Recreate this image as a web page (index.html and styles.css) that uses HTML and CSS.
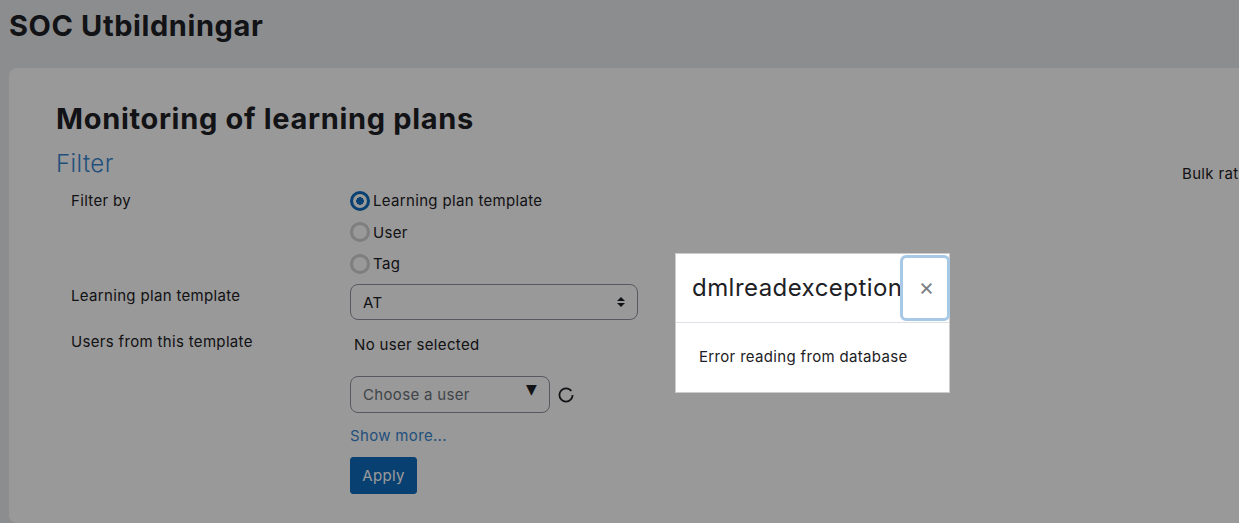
FILE: index.html
```html
<!DOCTYPE html>
<html lang="en">
<head>
    <meta charset="UTF-8">
    <meta name="viewport" content="width=device-width, initial-scale=1.0">
    <title>Monitoring of learning plans</title>
    <link rel="stylesheet" href="styles.css">
</head>
<body>
    <header class="page-header">
        <h1>SOC Utbildningar</h1>
    </header>

    <main class="card">
        <h2 class="card-title">Monitoring of learning plans</h2>
        <div class="card-columns">
            <section class="filter">
                <h3 class="filter-title">Filter</h3>

                <div class="form-row form-row-radios">
                    <div class="form-label">Filter by</div>
                    <div class="radios">
                        <label class="radio"><span class="radio-mark radio-mark-on"></span>Learning plan template</label>
                        <label class="radio"><span class="radio-mark"></span>User</label>
                        <label class="radio"><span class="radio-mark"></span>Tag</label>
                    </div>
                </div>

                <div class="form-row form-row-template">
                    <div class="form-label">Learning plan template</div>
                    <div class="select select-template">
                        AT
                        <svg class="select-arrows" width="10" height="12" viewBox="0 0 10 12"><path d="M1 5 5 1l4 4zM1 7l4 4 4-4z" fill="#1d2125"/></svg>
                    </div>
                </div>

                <div class="form-row form-row-users">
                    <div class="form-label">Users from this template</div>
                    <div class="users">
                        <div class="no-user">No user selected</div>
                        <div class="user-picker">
                            <div class="select select-user">
                                Choose a user
                                <span class="down-arrow">&#9660;</span>
                            </div>
                            <svg class="spinner" width="18" height="18" viewBox="0 0 18 18"><circle cx="9" cy="9" r="6.6" fill="none" stroke="#1d2125" stroke-width="1.8" stroke-dasharray="37 4.5"/></svg>
                        </div>
                        <a class="show-more" href="#">Show more...</a>
                        <button class="apply" type="button">Apply</button>
                    </div>
                </div>
            </section>

            <aside class="bulk">Bulk rating</aside>
        </div>
    </main>

    <div class="backdrop"></div>

    <div class="modal">
        <div class="modal-header">
            <div class="modal-title">dmlreadexception</div>
            <button class="modal-close" type="button">&times;</button>
        </div>
        <div class="modal-body">Error reading from database</div>
    </div>
</body>
</html>
```

FILE: styles.css
```css
* {
    box-sizing: border-box;
}

html, body {
    height: 100%;
    overflow: hidden;
}

body {
    margin: 0;
    background-color: #e9ebee;
    color: #1d2125;
    font-family: "Inter", "Liberation Sans", sans-serif;
    font-size: 15px;
    letter-spacing: 0.33px;
}

.page-header {
    height: 68px;
    padding: 9px 9px 0;
}

.page-header h1 {
    margin: 0;
    font-size: 29px;
    line-height: 34px;
    font-weight: 700;
    letter-spacing: 0.6px;
}

.card {
    margin-left: 9px;
    width: 1300px;
    height: 455px;
    padding: 32px 47px 0;
    background-color: #fff;
    border-radius: 8px;
}

.card-title {
    margin: 0;
    font-size: 29px;
    line-height: 38px;
    font-weight: 700;
    letter-spacing: 0.68px;
}

.card-columns {
    display: flex;
    justify-content: space-between;
}

.filter {
    width: 600px;
}

.filter-title {
    margin: 12px 0 13px;
    font-size: 24px;
    line-height: 27px;
    font-weight: 300;
    letter-spacing: 0.4px;
    color: #3a86cf;
}

.form-row {
    display: flex;
    padding-left: 15px;
}

.form-label {
    width: 279px;
    flex-shrink: 0;
}

.form-row-radios .form-label {
    line-height: 21px;
}

.radios {
    display: flex;
    flex-direction: column;
    gap: 10.5px;
    margin-bottom: 10px;
}

.radio {
    display: flex;
    align-items: center;
    gap: 3px;
    height: 21px;
    line-height: 21px;
}

.radio-mark {
    width: 20px;
    height: 20px;
    border: 3px solid #d2d2d2;
    border-radius: 50%;
    background-color: #fff;
}

.radio-mark-on {
    border-color: #0f6cbf;
    background: radial-gradient(circle, #0f6cbf 0 3.5px, #fff 4px);
}

.form-row-template {
    align-items: flex-start;
    margin-bottom: 11px;
}

.form-row-template .form-label {
    padding-top: 2px;
}

.select {
    display: flex;
    align-items: center;
    justify-content: space-between;
    background-color: #fff;
    border: 1px solid #8f959e;
    border-radius: 8px;
}

.select-template {
    width: 288px;
    height: 36px;
    padding: 0 12px;
}

.select-arrows {
    margin-right: -1px;
}

.form-row-users .form-label {
    padding-top: 1px;
}

.no-user {
    padding: 4px 0 0 4px;
    line-height: 20px;
}

.user-picker {
    display: flex;
    align-items: center;
    gap: 7px;
    margin-top: 21px;
}

.select-user {
    width: 200px;
    height: 37px;
    padding: 0 12px;
    color: #6a737b;
}

.down-arrow {
    color: #1d2125;
    font-size: 14px;
    margin: -11px 0 0 0;
    font-family: "DejaVu Sans", sans-serif;
}

.show-more {
    display: block;
    margin-top: 13px;
    line-height: 20px;
    color: #3a86cf;
    text-decoration: none;
}

.apply {
    display: block;
    margin-top: 11px;
    width: 67px;
    height: 37px;
    padding: 0;
    border: 1px solid #0f6cbf;
    border-radius: 3px;
    background-color: #0f6cbf;
    color: #fff;
    font: inherit;
    letter-spacing: inherit;
}

.bulk {
    flex-shrink: 0;
    width: 70px;
    margin-right: 10px;
    padding-top: 26px;
    white-space: nowrap;
}

.backdrop {
    position: fixed;
    inset: 0;
    background-color: #000;
    opacity: 0.4;
}

.modal {
    position: fixed;
    left: 675px;
    top: 253px;
    width: 275px;
    height: 140px;
    background-color: #fff;
    border: 1px solid #ccc;
}

.modal-header {
    display: flex;
    height: 69px;
    border-bottom: 1px solid #dee2e6;
}

.modal-title {
    flex: 1;
    min-width: 0;
    padding: 17px 0 0 16px;
    font-size: 24px;
    line-height: 33px;
    font-weight: 400;
    letter-spacing: 0.45px;
    white-space: nowrap;
}

.modal-close {
    flex-shrink: 0;
    width: 50px;
    height: 66px;
    margin: 1px -1px 0 0;
    padding: 0 0 3px 3px;
    border: 3px solid #a8c9e6;
    border-radius: 6px;
    background-color: #fff;
    color: #7a7f85;
    font-size: 24px;
    font-family: "Inter", sans-serif;
}

.modal-body {
    padding: 24px 23px;
    line-height: 20px;
}
```
